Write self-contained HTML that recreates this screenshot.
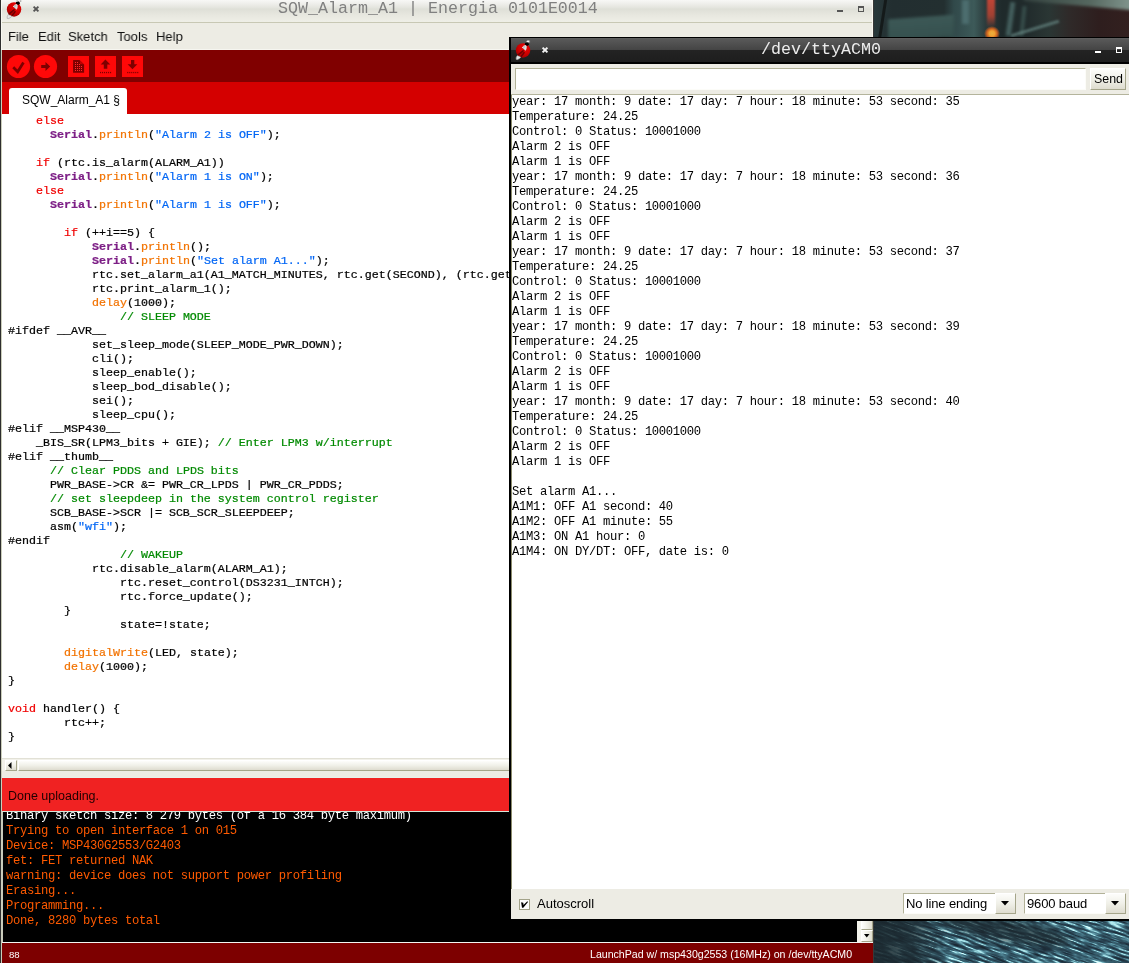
<!DOCTYPE html>
<html><head><meta charset="utf-8">
<style>
*{box-sizing:border-box;margin:0;padding:0}
html,body{width:1129px;height:963px;overflow:hidden}
body{position:relative;background:#26363a;font-family:"Liberation Sans",sans-serif;}
.abs{position:absolute}
span,.ttext{will-change:transform}
svg{position:absolute;display:block;overflow:visible}
/* ---------- main window ---------- */
#main{position:absolute;z-index:0;left:0;top:0;width:874px;height:963px;background:#edece4;overflow:hidden}
#main .lb0{position:absolute;left:0;top:0;width:1px;height:963px;background:#2e2e2e;z-index:5}
#main .lb1{position:absolute;left:1px;top:0;width:1px;height:963px;background:linear-gradient(#f8f8f0 50px,#cbcebb 50px);z-index:5}
#main .rb{position:absolute;left:873px;top:0;width:1px;height:963px;background:#383838;z-index:5}
#main .rb1{position:absolute;left:872px;top:0;width:1px;height:50px;background:#f8f8f0;z-index:5}
#mtitle{position:absolute;left:0;top:0;width:873px;height:23px;background:linear-gradient(#f8f8f6 0,#eeeeea 4px,#e3e4dd 8px,#dedfd7 9px,#e6e6de 14px,#efefe7 22px);border-bottom:1px solid #c8c8b4}
.ttext{position:absolute;font-family:"Liberation Mono",monospace;font-size:16.67px;line-height:20px;white-space:pre}
#menubar{position:absolute;left:0;top:23px;width:873px;height:27px;background:#edece4;font-size:13px;color:#111;border-bottom:1px solid #f6f6f0}
#menubar span{position:absolute;top:6px;line-height:16px;font-size:13.6px;transform:scaleX(.957);transform-origin:0 0}
#toolbar{position:absolute;left:2px;top:50px;width:871px;height:32px;background:#800000}
#tabbar{position:absolute;left:2px;top:82px;width:871px;height:32px;background:#d40000}
#tab{position:absolute;left:7px;top:6px;width:118px;height:26px;background:#fff;border-radius:3px 3px 0 0;font-size:12px;color:#000}
#editor{position:absolute;left:2px;top:114px;width:871px;height:644px;background:#fff;overflow:hidden}
pre.code{will-change:transform;position:absolute;left:6px;top:-0.5px;font-family:"Liberation Mono",monospace;font-size:11.67px;-webkit-text-stroke:0.22px;line-height:14px;color:#000}
.k{color:#f00000}.f{color:#f27300}.s{color:#0066f5}.c{color:#008a00}.o{color:#7d1f86;font-weight:bold}
#hscroll{position:absolute;left:2px;top:758px;width:871px;height:13px;background:#f2f1ea;border-top:1px solid #e2e1d6}
#status{position:absolute;left:2px;top:778px;width:871px;height:33px;background:#f02222;color:#200000;font-size:12.5px}
#console{position:absolute;left:3px;top:812px;width:854px;height:130px;background:#000;overflow:hidden}
#console pre{will-change:transform;position:absolute;left:3px;top:-3px;font-family:"Liberation Mono",monospace;font-size:12.2px;letter-spacing:-0.32px;line-height:15px;color:#ff5a00}
#bottom{position:absolute;left:2px;top:943px;width:871px;height:20px;background:#7d0000;color:#fff;font-size:9.6px}
/* ---------- serial monitor ---------- */
#ser{position:absolute;z-index:1;left:509px;top:37px;width:620px;height:884px;background:#edece4;overflow:hidden;font-size:13px;color:#000}
#stitle{position:absolute;left:0;top:0;width:620px;height:27px;background:linear-gradient(#000 0,#000 1px,#626262 1px,#595959 2px,#444 13px,#232323 13px,#1e1e1e 25px,#000 25px,#000 27px)}
#ser .lb{position:absolute;left:0;top:0;width:2px;height:884px;background:#000;z-index:5}
#ser .bb{position:absolute;left:0;top:882px;width:620px;height:2px;background:#000;z-index:5}
#sbody{position:absolute;left:2px;top:58px;width:618px;height:794px;background:#fff;overflow:hidden;border-left:1px solid #8c8c6c}
#sbody pre{will-change:transform;position:absolute;left:0px;top:0px;font-family:"Liberation Mono",monospace;font-size:12.2px;letter-spacing:-0.32px;line-height:15px;color:#000}
.btn{position:absolute;background:linear-gradient(#fdfdfb,#f0f0e8 50%,#dedccf);border:1px solid;border-color:#fff #a5a58a #a5a58a #fff}
.field{position:absolute;background:#fff;border:1px solid;border-color:#b2b298 #fcfcf8 #fcfcf8 #b2b298}
</style></head><body>
<svg width="0" height="0" style="position:absolute">
 <defs>
  <radialGradient id="rg" cx="0.62" cy="0.3" r="0.8"><stop offset="0" stop-color="#f00808"/><stop offset="0.55" stop-color="#d00000"/><stop offset="1" stop-color="#980000"/></radialGradient>
  <g id="rocket">
   <circle cx="9.05" cy="9.45" r="7.2" fill="url(#rg)"/>
   <path d="M3.4 14.5 L6.8 16.2 L5.5 17.6 L3.2 18.7 L2.1 18.3 L2.3 16.2 Z" fill="#e6e6e6" stroke="#a0a0a0" stroke-width="0.6"/>
   <path d="M9.1 9.8 L4.2 13.8" stroke="#6a0000" stroke-width="1.5" stroke-linecap="round"/>
   <path d="M10 11.7 L7.3 15.2" stroke="#6a0000" stroke-width="1.5" stroke-linecap="round"/>
   <path d="M6.6 12.6 L9.4 10.6 L8.2 13.6 Z" fill="#a00000"/>
   <path d="M9.8 4.6 L11.8 4 L12.8 5.6 L12.5 8 L11.6 9.8 L10 8.2 L8 6.6 L9 5.6 Z" fill="#d9dcdc"/>
   <path d="M10.2 5.2 L9.6 7.6" stroke="#8e9494" stroke-width="0.7"/>
   <path d="M8.2 6.6 L9.2 5.8 L9.2 7.2 Z" fill="#f4f4f4"/>
   <path d="M11 2.1 L14 1.3 L15.1 3.6 L13.4 4.9 L10.8 3.4 Z" fill="#000"/>
   <path d="M11.9 0.9 L13.2 -0.6 M15.7 -0.6 L15.7 1.9" stroke="#707070" stroke-width="0.8" fill="none"/>
   <path d="M12.2 1.1 L13.4 -0.6 H15.4 V1.5 Z" fill="#f4f4f4"/>
  </g>
 </defs>
</svg>
<!-- desktop top-right -->
<div class="abs" style="left:874px;top:0;width:255px;height:37px;overflow:hidden;background:linear-gradient(90deg,#28383a 0,#222e30 18px,#232f30 70px,#31494a 80px,#3d5a59 100px,#2a3a3b 112px,#1f2a2b 128px,#202a2b 150px,#2a3634 175px,#2f2a29 195px,#2e1e1e 225px,#33201f 256px)">
 <div class="abs" style="left:14px;top:17px;width:66px;height:22px;background:linear-gradient(#3c5856,#35504e);filter:blur(1.5px);transform:skewY(-4deg)"></div>
 <div class="abs" style="left:7px;top:-4px;width:3px;height:48px;background:#141a1a;transform:rotate(9deg);filter:blur(.6px)"></div>
 <div class="abs" style="left:88px;top:0;width:7px;height:24px;background:#55787a;opacity:.7;filter:blur(1.5px)"></div>
 <div class="abs" style="left:134px;top:2px;width:5px;height:34px;background:#50706e;opacity:.75;filter:blur(1.5px);transform:rotate(8deg)"></div>
 <div class="abs" style="left:147px;top:6px;width:4px;height:30px;background:#466460;opacity:.6;filter:blur(1.5px);transform:rotate(6deg)"></div>
 <div class="abs" style="left:136px;top:27px;width:50px;height:3px;background:#668783;opacity:.7;filter:blur(1px);transform:rotate(-17deg)"></div>
 <div class="abs" style="left:150px;top:-10px;width:120px;height:16px;background:linear-gradient(90deg,#34423f,#55675f 55%,#8ea39b);transform:rotate(5deg);filter:blur(1.5px)"></div>
 <div class="abs" style="left:113px;top:-2px;width:8px;height:30px;background:linear-gradient(rgba(205,70,55,.95),rgba(200,70,50,.75) 60%,rgba(190,70,50,0));filter:blur(1px)"></div>
 <div class="abs" style="left:110px;top:26px;width:16px;height:15px;border-radius:50%;background:radial-gradient(closest-side,#e8b040 0,#f0a030 35%,#c86020 65%,rgba(150,60,20,0) 100%)"></div>
</div>
<!-- desktop bottom-right -->
<div class="abs" style="left:873px;top:921px;width:256px;height:42px;overflow:hidden;background:#22333b">
 <svg width="256" height="42" viewBox="0 0 256 42">
  <defs>
   <filter id="streak" x="0" y="0" width="100%" height="100%" color-interpolation-filters="sRGB">
    <feTurbulence type="fractalNoise" baseFrequency="0.05 0.5" numOctaves="3" seed="11" result="n"/>
    <feColorMatrix in="n" type="matrix" values="1 0 0 0 0  1 0 0 0 0  1 0 0 0 0  0 0 0 0 1"/>
    <feComponentTransfer>
     <feFuncR type="table" tableValues="0.09 0.09 0.10 0.12 0.16 0.21 0.34 0.66 0.88 0.9 0.9"/>
     <feFuncG type="table" tableValues="0.12 0.13 0.15 0.19 0.26 0.36 0.56 0.90 1 1 1"/>
     <feFuncB type="table" tableValues="0.15 0.16 0.19 0.24 0.32 0.42 0.62 0.93 1 1 1"/>
    </feComponentTransfer>
   </filter>
   <linearGradient id="dk" x1="0" x2="1" y1="0" y2="0"><stop offset="0" stop-color="#1a262c" stop-opacity="0.9"/><stop offset="0.16" stop-color="#1a262c" stop-opacity="0.75"/><stop offset="0.30" stop-color="#1a262c" stop-opacity="0"/></linearGradient>
  </defs>
  <g transform="rotate(19 128 21)"><rect x="-40" y="-60" width="340" height="170" filter="url(#streak)"/></g>
  <rect width="256" height="42" fill="url(#dk)"/>
  <ellipse cx="132" cy="9" rx="66" ry="12" fill="#1b272d" opacity="0.72" transform="rotate(10 132 9)" style="filter:blur(4px)"/>
 </svg>
</div>

<div id="main">
 <div class="lb0"></div><div class="lb1"></div><div class="rb"></div><div class="rb1"></div>
 <div id="mtitle">
  <svg style="left:5px;top:0" width="18" height="20" viewBox="0 0 18 20"><use href="#rocket"/></svg>
  <svg style="left:33px;top:6px" width="6" height="6" viewBox="0 0 6 6"><path d="M0.6 0.6 L5.4 5.4 M5.4 0.6 L0.6 5.4" stroke="#555" stroke-width="1.9"/></svg>
  <div class="ttext" style="left:278px;top:-1px;color:#808080">SQW_Alarm_A1 | Energia 0101E0014</div>
  <div class="abs" style="left:837px;top:10px;width:6px;height:2px;background:#555"></div>
  <div class="abs" style="left:858px;top:6px;width:6px;height:6px;border:1px solid #555;border-top-width:2px"></div>
 </div>
 <div id="menubar"><span style="left:8px">File</span><span style="left:38px">Edit</span><span style="left:68px">Sketch</span><span style="left:117px">Tools</span><span style="left:156px">Help</span></div>
 <div id="toolbar">
  <svg style="left:0;top:0" width="150" height="32" viewBox="0 0 150 32">
   <circle cx="16.500" cy="16.500" r="11.600" fill="#ff0808"/>
   <circle cx="43.500" cy="16.500" r="11.600" fill="#ff0808"/>
   <rect x="66" y="6" width="21" height="21" fill="#ff0808"/>
   <rect x="93" y="6" width="21" height="21" fill="#ff0808"/>
   <rect x="120" y="6" width="21" height="21" fill="#ff0808"/>
   <path d="M11.250 17.300 L15.700 21.800 L21.450 12.500" stroke="#7d0000" stroke-width="2.700" fill="none"/>
   <path d="M39.200 15.100 H43.500 V11.900 L48.200 16.500 L43.500 21.100 V17.900 H39.200 Z" fill="#7d0000"/>
   <path d="M71.100 10 H77.500 L82.100 14.500 V22.800 H71.100 Z" fill="#7d0000"/>
   <path d="M78 10.500 V14.200 H81.600 Z" fill="#c00000"/>
   <rect x="73.0" y="12.0" width="1" height="1" fill="#ff2a2a"/><rect x="75.0" y="12.0" width="1" height="1" fill="#ff2a2a"/><rect x="73.0" y="14.0" width="1" height="1" fill="#ff2a2a"/><rect x="75.0" y="14.0" width="1" height="1" fill="#ff2a2a"/><rect x="77.0" y="14.0" width="1" height="1" fill="#ff2a2a"/><rect x="73.0" y="16.0" width="1" height="1" fill="#ff2a2a"/><rect x="75.0" y="16.0" width="1" height="1" fill="#ff2a2a"/><rect x="77.0" y="16.0" width="1" height="1" fill="#ff2a2a"/><rect x="79.0" y="16.0" width="1" height="1" fill="#ff2a2a"/><rect x="73.0" y="18.0" width="1" height="1" fill="#ff2a2a"/><rect x="75.0" y="18.0" width="1" height="1" fill="#ff2a2a"/><rect x="77.0" y="18.0" width="1" height="1" fill="#ff2a2a"/><rect x="79.0" y="18.0" width="1" height="1" fill="#ff2a2a"/><rect x="73.0" y="20.0" width="1" height="1" fill="#ff2a2a"/><rect x="75.0" y="20.0" width="1" height="1" fill="#ff2a2a"/><rect x="77.0" y="20.0" width="1" height="1" fill="#ff2a2a"/><rect x="79.0" y="20.0" width="1" height="1" fill="#ff2a2a"/>
   <path d="M103.400 9.400 L108.300 14.600 H105.300 V18.700 H101.800 V14.600 H98.700 Z" fill="#7d0000"/>
   <path d="M130.450 19.300 L135.300 14.300 H132.300 V10 H129 V14.300 H125.600 Z" fill="#7d0000"/>
   <rect x="98.0" y="21.9" width="1.1" height="1.3" fill="#7d0000"/><rect x="100.0" y="21.9" width="1.1" height="1.3" fill="#7d0000"/><rect x="102.0" y="21.9" width="1.1" height="1.3" fill="#7d0000"/><rect x="104.0" y="21.9" width="1.1" height="1.3" fill="#7d0000"/><rect x="106.0" y="21.9" width="1.1" height="1.3" fill="#7d0000"/><rect x="108.0" y="21.9" width="1.1" height="1.3" fill="#7d0000"/><rect x="125.2" y="21.9" width="1.1" height="1.3" fill="#7d0000"/><rect x="127.2" y="21.9" width="1.1" height="1.3" fill="#7d0000"/><rect x="129.2" y="21.9" width="1.1" height="1.3" fill="#7d0000"/><rect x="131.2" y="21.9" width="1.1" height="1.3" fill="#7d0000"/><rect x="133.2" y="21.9" width="1.1" height="1.3" fill="#7d0000"/><rect x="135.2" y="21.9" width="1.1" height="1.3" fill="#7d0000"/>
  </svg>
 </div>
 <div id="tabbar"><div id="tab"><span class="abs" style="left:13px;top:5px;line-height:14px;white-space:pre">SQW_Alarm_A1 §</span></div></div>
 <div id="editor"><pre class="code">    <span class="k">else</span>
      <span class="o">Serial</span>.<span class="f">println</span>(<span class="s">"Alarm 2 is OFF"</span>);

    <span class="k">if</span> (rtc.is_alarm(ALARM_A1))
      <span class="o">Serial</span>.<span class="f">println</span>(<span class="s">"Alarm 1 is ON"</span>);
    <span class="k">else</span>
      <span class="o">Serial</span>.<span class="f">println</span>(<span class="s">"Alarm 1 is OFF"</span>);

        <span class="k">if</span> (++i==5) {
            <span class="o">Serial</span>.<span class="f">println</span>();
            <span class="o">Serial</span>.<span class="f">println</span>(<span class="s">"Set alarm A1..."</span>);
            rtc.set_alarm_a1(A1_MATCH_MINUTES, rtc.get(SECOND), (rtc.get(MINUTE)+2)%60, 0, 0);
            rtc.print_alarm_1();
            <span class="f">delay</span>(1000);
                <span class="c">// SLEEP MODE</span>
#ifdef __AVR__
            set_sleep_mode(SLEEP_MODE_PWR_DOWN);
            cli();
            sleep_enable();
            sleep_bod_disable();
            sei();
            sleep_cpu();
#elif __MSP430__
    _BIS_SR(LPM3_bits + GIE); <span class="c">// Enter LPM3 w/interrupt</span>
#elif __thumb__
      <span class="c">// Clear PDDS and LPDS bits</span>
      PWR_BASE-&gt;CR &amp;= PWR_CR_LPDS | PWR_CR_PDDS;
      <span class="c">// set sleepdeep in the system control register</span>
      SCB_BASE-&gt;SCR |= SCB_SCR_SLEEPDEEP;
      asm(<span class="s">"wfi"</span>);
#endif
                <span class="c">// WAKEUP</span>
            rtc.disable_alarm(ALARM_A1);
                rtc.reset_control(DS3231_INTCH);
                rtc.force_update();
        }
                state=!state;

        <span class="f">digitalWrite</span>(LED, state);
        <span class="f">delay</span>(1000);
}

<span class="k">void</span> handler() {
        rtc++;
}</pre></div>
 <div id="hscroll">
  <div class="btn" style="left:3px;top:1px;width:12px;height:11px"></div>
  <svg style="left:6px;top:3px" width="4" height="7" viewBox="0 0 4 7"><path d="M3.5 0 L0 3.500 L3.500 7 Z" fill="#000"/></svg>
  <div class="btn" style="left:16px;top:1px;width:600px;height:11px"></div>
 </div>
 <div class="abs" style="left:2px;top:777px;width:871px;height:1px;background:#e6f2ea"></div>
 <div id="status"><span class="abs" style="left:6px;top:11px;line-height:14px">Done uploading.</span></div>
 <div class="abs" style="left:2px;top:811px;width:871px;height:1px;background:#d6e6d8"></div>
 <div class="abs" style="left:2px;top:812px;width:1px;height:131px;background:#c9c9ba"></div>
 <div id="console"><pre><span style="color:#fff">Binary sketch size: 8 279 bytes (of a 16 384 byte maximum)</span>
Trying to open interface 1 on 015
Device: MSP430G2553/G2403
fet: FET returned NAK
warning: device does not support power profiling
Erasing...
Programming...
Done, 8280 bytes total</pre></div>
 <div class="abs" style="left:857px;top:812px;width:16px;height:130px;background:#f3f3ec">
  <div class="btn" style="left:4px;top:0;width:12px;height:118px;background:linear-gradient(90deg,#fdfdfb,#f0f0e8 50%,#dedccf)"></div>
  <div class="btn" style="left:4px;top:118px;width:12px;height:12px;background:linear-gradient(90deg,#fdfdfb,#f0f0e8 50%,#dedccf)"></div>
  <svg style="left:7px;top:122px" width="5.500" height="3.500" viewBox="0 0 5.500 3.500"><path d="M0 0 H5.500 L2.750 3.500 Z" fill="#000"/></svg>
 </div>
 <div class="abs" style="left:2px;top:942px;width:871px;height:1px;background:#f4f4f0"></div>
 <div id="bottom"><span class="abs" style="left:7px;top:6px;line-height:12px">88</span><span class="abs" style="right:21px;top:5px;line-height:12px;white-space:pre;font-size:10.6px">LaunchPad w/ msp430g2553 (16MHz) on /dev/ttyACM0</span></div>
</div>

<div id="ser">
 <div class="lb"></div><div class="bb"></div>
 <div id="stitle">
  <svg style="left:5px;top:4px" width="18" height="20" viewBox="0 0 18 20"><use href="#rocket"/></svg>
  <svg style="left:33px;top:10px" width="6" height="6" viewBox="0 0 6 6"><path d="M0.6 0.6 L5.4 5.4 M5.4 0.6 L0.6 5.4" stroke="#f2f2f2" stroke-width="2"/></svg>
  <div class="ttext" style="left:252px;top:2.5px;color:#ececec">/dev/ttyACM0</div>
  <div class="abs" style="left:586px;top:14px;width:6px;height:2px;background:#fff"></div>
  <div class="abs" style="left:607px;top:10px;width:6px;height:6px;border:1px solid #fff;border-top-width:2px"></div>
 </div>
 <div class="field" style="left:6px;top:31px;width:571px;height:22px"></div>
 <div class="btn" style="left:581px;top:31px;width:36px;height:22px"><span class="abs" style="left:3px;top:3px;line-height:15px;font-size:12.4px">Send</span></div>
 <div class="abs" style="left:2px;top:57px;width:618px;height:1px;background:#b4b49c"></div>
 <div id="sbody"><pre>year: 17 month: 9 date: 17 day: 7 hour: 18 minute: 53 second: 35
Temperature: 24.25
Control: 0 Status: 10001000
Alarm 2 is OFF
Alarm 1 is OFF
year: 17 month: 9 date: 17 day: 7 hour: 18 minute: 53 second: 36
Temperature: 24.25
Control: 0 Status: 10001000
Alarm 2 is OFF
Alarm 1 is OFF
year: 17 month: 9 date: 17 day: 7 hour: 18 minute: 53 second: 37
Temperature: 24.25
Control: 0 Status: 10001000
Alarm 2 is OFF
Alarm 1 is OFF
year: 17 month: 9 date: 17 day: 7 hour: 18 minute: 53 second: 39
Temperature: 24.25
Control: 0 Status: 10001000
Alarm 2 is OFF
Alarm 1 is OFF
year: 17 month: 9 date: 17 day: 7 hour: 18 minute: 53 second: 40
Temperature: 24.25
Control: 0 Status: 10001000
Alarm 2 is OFF
Alarm 1 is OFF

Set alarm A1...
A1M1: OFF A1 second: 40
A1M2: OFF A1 minute: 55
A1M3: ON A1 hour: 0
A1M4: ON DY/DT: OFF, date is: 0</pre></div>
 <div class="abs" style="left:10px;top:862px;width:11px;height:11px;background:#fff;border:1px solid #a3a38a"></div>
 <svg style="left:10px;top:862px" width="11" height="11" viewBox="0 0 11 11"><path d="M2.100 3.300 L4.300 3.700 L4.500 5.900 L8.300 2.300 L9 3 L4.300 8.800 L3 8.800 Z" fill="#000"/></svg>
 <span class="abs" style="left:28px;top:859px;line-height:16px">Autoscroll</span>
 <div class="field" style="left:394px;top:856px;width:93px;height:21px;border-right:none"><span class="abs" style="left:2px;top:2px;line-height:16px;white-space:pre;letter-spacing:-0.15px">No line ending</span></div>
 <div class="btn" style="left:486px;top:856px;width:21px;height:21px"></div>
 <svg style="left:492px;top:864px" width="8" height="4.500" viewBox="0 0 8 4.500"><path d="M0 0 H8 L4 4.500 Z" fill="#000"/></svg>
 <div class="field" style="left:515px;top:856px;width:82px;height:21px;border-right:none"><span class="abs" style="left:2px;top:2px;line-height:16px;white-space:pre;letter-spacing:-0.15px">9600 baud</span></div>
 <div class="btn" style="left:596px;top:856px;width:21px;height:21px"></div>
 <svg style="left:602px;top:864px" width="8" height="4.500" viewBox="0 0 8 4.500"><path d="M0 0 H8 L4 4.500 Z" fill="#000"/></svg>
</div>
</body></html>
